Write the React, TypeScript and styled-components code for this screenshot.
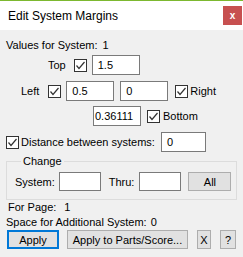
import React from "react";
import styled, { createGlobalStyle } from "styled-components";

const Global = createGlobalStyle`
  html, body { margin: 0; padding: 0; background: #f0f0f0; }
  body { font-family: "Liberation Sans", Arial, sans-serif; font-size: 11px; color: #000; }
  * { box-sizing: border-box; }
`;

const Dialog = styled.div`
  width: 243px;
  height: 257px;
  background: #f0f0f0;
  display: flex;
  flex-direction: column;
  overflow: hidden;
`;

const TitleBar = styled.div`
  height: 30px;
  border-top: 1px solid #7cb82f;
  background: #fff;
  display: flex;
  align-items: center;
  justify-content: space-between;
  padding: 0 1px 0 8px;
`;

const Title = styled.span`
  font-size: 12px;
  color: #000;
`;

const CloseBtn = styled.div`
  width: 19px;
  height: 19px;
  background: #c75050;
  color: #fff;
  font-weight: bold;
  font-size: 10px;
  display: flex;
  align-items: center;
  justify-content: center;
  line-height: 1;
`;

const Body = styled.div`
  display: flex;
  flex-direction: column;
`;

const Row = styled.div<{ $h?: number; $mt?: number; $pl?: number }>`
  display: flex;
  align-items: center;
  height: ${(p) => p.$h ?? 20}px;
  margin-top: ${(p) => p.$mt ?? 0}px;
  padding-left: ${(p) => p.$pl ?? 0}px;
  white-space: nowrap;
`;

const Text = styled.span<{ $ml?: number }>`
  margin-left: ${(p) => p.$ml ?? 0}px;
`;

const Box = styled.span<{ $ml?: number }>`
  width: 13px;
  height: 13px;
  border: 1px solid #333;
  background: #fff;
  margin-left: ${(p) => p.$ml ?? 0}px;
  display: inline-flex;
  align-items: center;
  justify-content: center;
  flex: none;
`;

const Field = styled.div<{ $w?: number; $h?: number; $ml?: number; $pl?: number }>`
  width: ${(p) => p.$w ?? 48}px;
  height: ${(p) => p.$h ?? 20}px;
  margin-left: ${(p) => p.$ml ?? 0}px;
  padding-left: ${(p) => p.$pl ?? 5}px;
  border: 1px solid #7a7a7a;
  background: #fff;
  display: flex;
  align-items: center;
  overflow: hidden;
  flex: none;
`;

const Group = styled.fieldset`
  margin: 2px 6px 0 6px;
  padding: 0 0 8px 8px;
  border: 1px solid #dcdcdc;
  min-width: 0;
`;

const Legend = styled.legend`
  margin-left: 6px;
  padding: 0 2px;
  line-height: 15px;
`;

const Button = styled.div<{ $w: number; $ml?: number; $primary?: boolean }>`
  width: ${(p) => p.$w}px;
  height: 19px;
  margin-left: ${(p) => p.$ml ?? 0}px;
  background: #e1e1e1;
  border: ${(p) => (p.$primary ? "2px solid #0078d7" : "1px solid #adadad")};
  display: flex;
  align-items: center;
  justify-content: center;
  flex: none;
  white-space: nowrap;
`;

const Check = ({ ml }: { ml?: number }) => (
  <Box $ml={ml}>
    <svg width="11" height="11" viewBox="0 0 11 11">
      <polyline points="1.5,5.5 4,8.5 9.5,2" fill="none" stroke="#333" strokeWidth="1.2" />
    </svg>
  </Box>
);

export default function App() {
  return (
    <Dialog>
      <Global />
      <TitleBar>
        <Title>Edit System Margins</Title>
        <CloseBtn>x</CloseBtn>
      </TitleBar>
      <Body>
        <Row $mt={5} $pl={6}>
          <Text>Values for System:</Text>
          <Text $ml={5}>1</Text>
        </Row>
        <Row $pl={48}>
          <Text>Top</Text>
          <Check ml={8} />
          <Field $ml={5}>1.5</Field>
        </Row>
        <Row $mt={6} $pl={21}>
          <Text>Left</Text>
          <Check ml={9} />
          <Field $ml={5}>0.5</Field>
          <Field $ml={6}>0</Field>
          <Check ml={7} />
          <Text $ml={2}>Right</Text>
        </Row>
        <Row $mt={5} $pl={93}>
          <Field $pl={1}>0.36111</Field>
          <Check ml={6} />
          <Text $ml={3}>Bottom</Text>
        </Row>
        <Row $mt={6} $pl={6}>
          <Check />
          <Text $ml={2}>Distance between systems:</Text>
          <Field $w={45} $ml={6}>0</Field>
        </Row>
        <Group>
          <Legend>Change</Legend>
          <Row $h={19} $mt={3}>
            <Text>System:</Text>
            <Field $w={42} $h={19} $ml={4} />
            <Text $ml={8}>Thru:</Text>
            <Field $w={42} $h={19} $ml={5} />
            <Button $w={43} $ml={7}>All</Button>
          </Row>
        </Group>
        <Row $h={14} $pl={8}>
          <Text>For Page:</Text>
          <Text $ml={8}>1</Text>
        </Row>
        <Row $h={14} $mt={1} $pl={6}>
          <Text>Space for Additional System:</Text>
          <Text $ml={4}>0</Text>
        </Row>
        <Row $h={19} $mt={1} $pl={7}>
          <Button $w={52} $primary>Apply</Button>
          <Button $w={121} $ml={8}>Apply to Parts/Score...</Button>
          <Button $w={14} $ml={9}>X</Button>
          <Button $w={16} $ml={9}>?</Button>
        </Row>
      </Body>
    </Dialog>
  );
}
